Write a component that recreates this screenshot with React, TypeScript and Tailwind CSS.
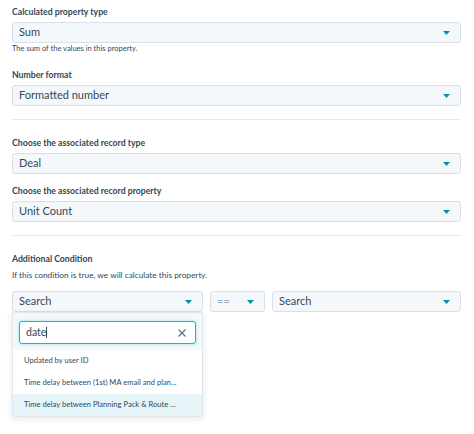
import { useState } from 'react';

const Caret = () => (
  <svg width="7" height="4" viewBox="0 0 7 4" className="shrink-0">
    <path d="M0 0h7L3.5 4z" fill="#0091ae" />
  </svg>
);

const Select = ({ value, muted = false, className = '' }: { value: string; muted?: boolean; className?: string }) => (
  <div
    className={`h-[21px] flex items-center justify-between pl-[6px] pr-[10px] bg-[#f5f8fa] border border-[#d6e0ea] rounded-[3px] ${className}`}
  >
    <span className={`text-[11px] ${muted ? 'text-[#99afc4]' : 'text-[#33475b]'}`}>{value}</span>
    <Caret />
  </div>
);

const Label = ({ children, className = '' }: { children: string; className?: string }) => (
  <div className={`text-[8.7px] leading-[12px] font-bold text-[#33475b] mb-[4px] ${className}`}>{children}</div>
);

const options = [
  'Updated by user ID',
  'Time delay between (1st) MA email and plan...',
  'Time delay between Planning Pack & Route ...',
];

export default function App() {
  const [query] = useState('date');

  return (
    <div className="w-[474px] h-[434px] bg-white px-3 pr-[13px] pt-[6px] overflow-hidden" style={{ fontFamily: 'Lato, "Open Sans", sans-serif' }}>
      {/* 계산 속성 */}
      <Label>Calculated property type</Label>
      <Select value="Sum" />
      <p className="text-[7.5px] leading-[10px] text-[#33475b] mt-[1px]">The sum of the values in this property.</p>

      <Label className="mt-[15px]">Number format</Label>
      <Select value="Formatted number" />

      <div className="h-px bg-[#e5eaf0] mt-[13px]" />

      {/* 연결 레코드 */}
      <Label className="mt-[17px]">Choose the associated record type</Label>
      <Select value="Deal" />

      <Label className="mt-[11px]">Choose the associated record property</Label>
      <Select value="Unit Count" />

      <div className="h-px bg-[#e5eaf0] mt-[13px]" />

      {/* 추가 조건 */}
      <Label className="mt-[17px] mb-[3px]">Additional Condition</Label>
      <p className="text-[8.3px] leading-[12px] text-[#33475b]">If this condition is true, we will calculate this property.</p>

      <div className="flex gap-[7px] mt-[10px]">
        <div className="relative w-[191px]">
          <Select value="Search" />
          <div className="absolute left-0 top-[21px] w-[191px] bg-white border border-[#dfe6ee] rounded-b-[3px] shadow-[0_2px_6px_rgba(45,62,80,0.12)] z-10">
            <div className="bg-[#f5f8fa] px-[6px] pt-[8px] pb-[6px]">
              <div className="h-[23px] flex items-center justify-between bg-white border border-[#00bfd6] rounded-[3px] shadow-[0_0_3px_rgba(0,208,228,0.5)] pl-[6px] pr-[9px]">
                <span className="text-[10.5px] text-[#33475b] flex items-center">
                  {query}
                  <span className="inline-block w-px h-[11px] bg-[#33475b]" />
                </span>
                <svg width="8" height="8" viewBox="0 0 8 8">
                  <path d="M0.5 0.5l7 7M7.5 0.5l-7 7" stroke="#516f90" strokeWidth="1.2" />
                </svg>
              </div>
            </div>
            {options.map((o, i) => (
              <div
                key={o}
                className={`h-[22px] flex items-center px-[11px] text-[7.6px] text-[#33475b] whitespace-nowrap ${i === 2 ? 'bg-[#e5f5f8]' : ''}`}
              >
                {o}
              </div>
            ))}
          </div>
        </div>
        <div className="w-[55px]">
          <Select value="==" muted />
        </div>
        <div className="flex-1">
          <Select value="Search" />
        </div>
      </div>
    </div>
  );
}
